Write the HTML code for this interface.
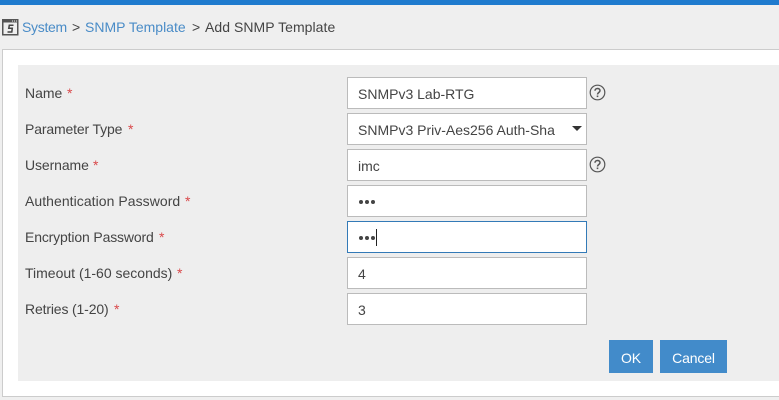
<!DOCTYPE html>
<html><head><meta charset="utf-8"><style>
html,body{margin:0;padding:0}
body{width:779px;height:400px;background:#efefef;position:relative;overflow:hidden;font-family:"Liberation Sans",sans-serif;font-size:14px;color:#444}
.a{position:absolute;white-space:nowrap}
.top{left:0;top:0;width:779px;height:5px;background:#1f7bce}
.panel{left:2px;top:49px;width:790px;height:348px;box-sizing:border-box;border:1px solid #ccc;background:#fff}
.form{left:18px;top:65px;width:761px;height:316px;background:#eee}
.l{left:25px;height:20px;line-height:20px;color:#444}
.s{height:20px;line-height:20px;color:#d9484a;font-size:14px}
.inp{left:347px;width:240px;height:32px;box-sizing:border-box;border:1px solid #bbb;background:#fff;line-height:32px;padding-left:10px;color:#444}
.lnk{color:#4a8cc7}
.btn{top:340px;height:33px;background:#428bca;color:#fff;text-align:center;line-height:36px;letter-spacing:-.15px}
.dot{position:absolute;top:14px;width:4px;height:4px;border-radius:50%;background:#444}
</style></head><body>
<div class="a top"></div>
<svg class="a" style="left:2px;top:19px" width="17" height="17" viewBox="0 0 17 17"><rect x=".75" y=".75" width="15" height="15" fill="#efefef" stroke="#555" stroke-width="1.500"/><rect x="1" y="1" width="15" height="2.500" fill="#555"/><rect x="10" y="1.500" width="1" height="1" fill="#eee"/><rect x="12" y="1.500" width="1" height="1" fill="#eee"/><rect x="14" y="1.500" width="1" height="1" fill="#eee"/><path d="M11.500 6.300H7.300L6.800 9.200H10.300L9.800 13H5.500" fill="none" stroke="#444" stroke-width="1.500"/></svg>
<div class="a lnk" style="left:22px;top:17px;line-height:20px;letter-spacing:-.3px">System</div>
<div class="a" style="left:72px;top:17px;line-height:20px">&gt;</div>
<div class="a lnk" style="left:85px;top:17px;line-height:20px">SNMP Template</div>
<div class="a" style="left:192px;top:17px;line-height:20px">&gt;</div>
<div class="a" style="left:205px;top:17px;line-height:20px;letter-spacing:.05px">Add SNMP Template</div>
<div class="a panel"></div>
<div class="a form"></div>
<div class="a l" style="top:83px">Name</div><div class="a s" style="left:67px;top:83px">*</div>
<div class="a l" style="top:119px;letter-spacing:-.15px">Parameter Type</div><div class="a s" style="left:128px;top:119px">*</div>
<div class="a l" style="top:155px;letter-spacing:-.1px">Username</div><div class="a s" style="left:93px;top:155px">*</div>
<div class="a l" style="top:191px;letter-spacing:.05px">Authentication Password</div><div class="a s" style="left:185px;top:191px">*</div>
<div class="a l" style="top:227px;letter-spacing:-.15px">Encryption Password</div><div class="a s" style="left:159px;top:227px">*</div>
<div class="a l" style="top:263px">Timeout (1-60 seconds)</div><div class="a s" style="left:177px;top:263px">*</div>
<div class="a l" style="top:299px;letter-spacing:-.15px">Retries (1-20)</div><div class="a s" style="left:114px;top:299px">*</div>
<div class="a inp" style="top:77px">SNMPv3 Lab-RTG</div>
<div class="a inp" style="top:113px">SNMPv3 Priv-Aes256 Auth-Sha</div>
<svg class="a" style="left:572px;top:126px" width="11" height="6"><path d="M0 0H10L5 5Z" fill="#333"/></svg>
<div class="a inp" style="top:149px">imc</div>
<div class="a inp" style="top:185px"><span class="dot" style="left:11px"></span><span class="dot" style="left:17px"></span><span class="dot" style="left:23px"></span></div>
<div class="a inp" style="top:221px;border-color:#337ab7"><span class="dot" style="left:11px"></span><span class="dot" style="left:17px"></span><span class="dot" style="left:23px"></span><span style="position:absolute;left:28px;top:7px;width:1px;height:17px;background:#222"></span></div>
<div class="a inp" style="top:257px">4</div>
<div class="a inp" style="top:293px">3</div>
<svg class="a" style="left:589px;top:84px" width="17" height="17" viewBox="0 0 17 17"><circle cx="8.500" cy="8.500" r="7.300" fill="none" stroke="#555" stroke-width="1.200"/><path d="M6 6.800C6 3.800 11 3.800 11 6.600C11 8.500 8.500 8.500 8.500 10.500" fill="none" stroke="#555" stroke-width="1.500"/><rect x="7.700" y="11.500" width="1.600" height="1.600" fill="#555"/></svg>
<svg class="a" style="left:589px;top:156px" width="17" height="17" viewBox="0 0 17 17"><circle cx="8.500" cy="8.500" r="7.300" fill="none" stroke="#555" stroke-width="1.200"/><path d="M6 6.800C6 3.800 11 3.800 11 6.600C11 8.500 8.500 8.500 8.500 10.500" fill="none" stroke="#555" stroke-width="1.500"/><rect x="7.700" y="11.500" width="1.600" height="1.600" fill="#555"/></svg>
<div class="a btn" style="left:609px;width:44px">OK</div>
<div class="a btn" style="left:660px;width:67px">Cancel</div>
</body></html>
